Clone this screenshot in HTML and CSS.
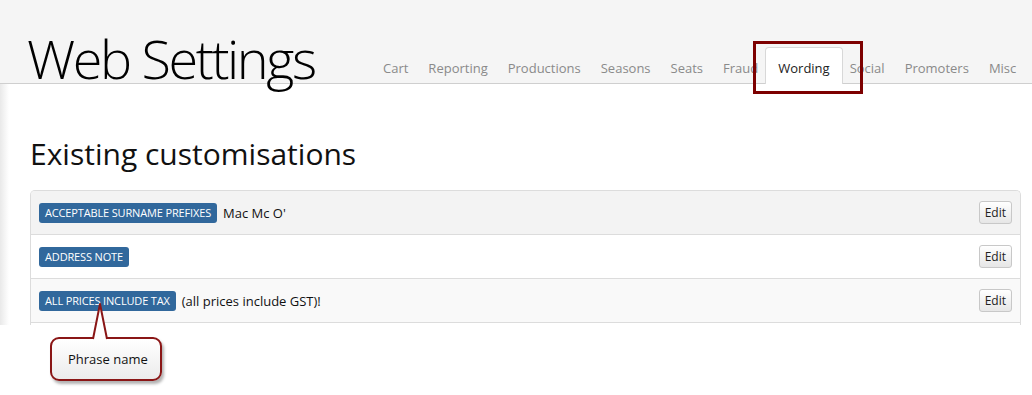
FILE: index.html
```html
<!DOCTYPE html>
<html lang="en">
<head>
  <meta charset="UTF-8">
  <meta name="viewport" content="width=device-width, initial-scale=1.0">
  <title>Web Settings</title>
  <link rel="stylesheet" href="styles.css">
</head>
<body>

  <div class="page">
    <header class="top">
      <h1>Web Settings</h1>
      <ul class="tabs">
        <li><a href="#">Cart</a></li>
        <li><a href="#">Reporting</a></li>
        <li><a href="#">Productions</a></li>
        <li><a href="#">Seasons</a></li>
        <li><a href="#">Seats</a></li>
        <li><a href="#">Fraud</a></li>
        <li class="active"><a href="#">Wording</a></li>
        <li><a href="#">Social</a></li>
        <li><a href="#">Promoters</a></li>
        <li><a href="#">Misc</a></li>
      </ul>
    </header>

    <main class="content">
      <h2>Existing customisations</h2>
      <div class="phrases">
        <div class="phrase">
          <span class="label">Acceptable surname prefixes</span>
          <span class="value">Mac Mc O'</span>
          <button class="edit-btn">Edit</button>
        </div>
        <div class="phrase">
          <span class="label">Address note</span>
          <span class="value"></span>
          <button class="edit-btn">Edit</button>
        </div>
        <div class="phrase">
          <span class="label">All prices include tax</span>
          <span class="value">(all prices include GST)!</span>
          <button class="edit-btn">Edit</button>
        </div>
        <div class="phrase">
          <span class="label">Booking fee</span>
          <span class="value"></span>
          <button class="edit-btn">Edit</button>
        </div>
      </div>
    </main>
  </div>

  <!-- annotations drawn over the screenshot -->
  <div class="highlight"></div>

  <svg class="callout-tail" width="26" height="40" viewBox="0 0 26 40">
    <polygon points="12,4 5,39 19,39" fill="#ffffff"/>
    <polyline points="5,39 12,4 19,39" fill="none" stroke="#8a1616" stroke-width="2" stroke-linejoin="round"/>
  </svg>
  <div class="callout">Phrase name</div>

</body>
</html>
```

FILE: styles.css
```css
body {
  margin: 0;
  font-family: 'Open Sans', sans-serif;
  background-color: #fff;
  color: #222;
}

.page {
  height: 325px;
  overflow: hidden;
}

/* Header */
.top {
  display: flex;
  height: 83px;
  padding-left: 27px;
  background-color: #f5f5f5;
  border-bottom: 1px solid #cfcfcf;
}

.top h1 {
  flex: 0 0 346px;
  margin: 31px 0 0;
  font-size: 54px;
  font-weight: 300;
  line-height: 54px;
  letter-spacing: -2.4px;
  color: #000;
  white-space: nowrap;
}

.tabs {
  display: flex;
  align-self: flex-end;
  margin: 0 0 -1px;
  padding: 0;
  list-style: none;
}

.tabs li a {
  display: block;
  padding: 10px 9px 5px;
  border: 1px solid transparent;
  border-bottom: none;
  border-radius: 4px 4px 0 0;
  font-size: 13px;
  line-height: 20px;
  color: #8a8a8a;
  text-decoration: none;
}

.tabs li.active a {
  padding: 10px 12px 6px;
  margin: 0 -3px;
  background-color: #fff;
  border-color: #d8d8d8;
  color: #222;
}

/* Content */
.content {
  height: 241px;
  padding: 0 11px 0 30px;
  background: linear-gradient(to right, #e9e9e9, #fff 9px);
}

.content h2 {
  margin: 0;
  padding-top: 52px;
  font-size: 30px;
  font-weight: 400;
  line-height: 36px;
  color: #111;
}

.phrases {
  margin-top: 18px;
  border: 1px solid #dcdcdc;
  border-bottom: none;
  border-radius: 5px 5px 0 0;
  overflow: hidden;
}

.phrase {
  display: flex;
  align-items: center;
  height: 43px;
  padding: 0 8px;
  border-bottom: 1px solid #dcdcdc;
  background-color: #fff;
}

.phrase:nth-child(1) {
  background-color: #f3f3f3;
}

.phrase:nth-child(3) {
  background-color: #f9f9f9;
}

.label {
  padding: 0 6px;
  border-radius: 3px;
  background-color: #31689c;
  color: #fff;
  font-size: 11px;
  line-height: 20px;
  letter-spacing: -0.15px;
  text-transform: uppercase;
  white-space: nowrap;
}

.value {
  flex: 1;
  margin-left: 6px;
  font-size: 13px;
  color: #111;
}

.edit-btn {
  height: 23px;
  padding: 0 5px;
  border: 1px solid #c8c8c8;
  border-radius: 3px;
  background: linear-gradient(#ffffff, #e6e6e6);
  font-family: 'Open Sans', sans-serif;
  font-size: 12px;
  color: #222;
  cursor: pointer;
}

/* Annotations */
.highlight {
  position: absolute;
  left: 753px;
  top: 41px;
  width: 104px;
  height: 47px;
  border: 3px solid #7d0000;
}

.callout {
  position: absolute;
  left: 50px;
  top: 337px;
  width: 92px;
  height: 40px;
  padding-left: 16px;
  border: 2px solid #8a1616;
  border-radius: 9px;
  background: linear-gradient(#ffffff, #ebebeb);
  box-shadow: 2px 3px 3px rgba(0, 0, 0, 0.3);
  font-size: 13px;
  line-height: 40px;
  color: #111;
}

.callout-tail {
  position: absolute;
  z-index: 1;
  left: 88px;
  top: 300px;
}
```
